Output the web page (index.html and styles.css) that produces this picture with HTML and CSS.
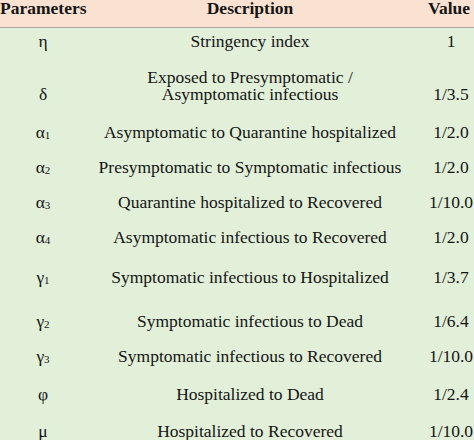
FILE: index.html
```html
<!DOCTYPE html>
<html lang="en">
<head>
<meta charset="utf-8">
<title>Parameters</title>
<link rel="stylesheet" href="styles.css">
</head>
<body>
<table class="params">
  <colgroup>
    <col class="c-param">
    <col class="c-desc">
    <col class="c-val">
  </colgroup>
  <thead>
    <tr class="head">
      <th>Parameters</th>
      <th>Description</th>
      <th>Value</th>
    </tr>
  </thead>
  <tbody>
    <tr class="r-eta"><td>η</td><td>Stringency index</td><td class="val">1</td></tr>
    <tr class="r-delta"><td>δ</td><td><span class="line">Exposed to Presymptomatic /</span><span class="line">Asymptomatic infectious</span></td><td class="val">1/3.5</td></tr>
    <tr class="r-a1"><td>α<span class="sub">1</span></td><td>Asymptomatic to Quarantine hospitalized</td><td class="val">1/2.0</td></tr>
    <tr class="r-a2"><td>α<span class="sub">2</span></td><td>Presymptomatic to Symptomatic infectious</td><td class="val">1/2.0</td></tr>
    <tr class="r-a3"><td>α<span class="sub">3</span></td><td>Quarantine hospitalized to Recovered</td><td class="val">1/10.0</td></tr>
    <tr class="r-a4"><td>α<span class="sub">4</span></td><td>Asymptomatic infectious to Recovered</td><td class="val">1/2.0</td></tr>
    <tr class="r-g1"><td>γ<span class="sub">1</span></td><td>Symptomatic infectious to Hospitalized</td><td class="val">1/3.7</td></tr>
    <tr class="r-g2"><td>γ<span class="sub">2</span></td><td>Symptomatic infectious to Dead</td><td class="val">1/6.4</td></tr>
    <tr class="r-g3"><td>γ<span class="sub">3</span></td><td>Symptomatic infectious to Recovered</td><td class="val">1/10.0</td></tr>
    <tr class="r-phi"><td>φ</td><td>Hospitalized to Dead</td><td class="val">1/2.4</td></tr>
    <tr class="r-mu"><td>μ</td><td>Hospitalized to Recovered</td><td class="val">1/10.0</td></tr>
  </tbody>
</table>
</body>
</html>
```
FILE: styles.css
```css
html, body {
  margin: 0;
  padding: 0;
  background: #e2efd9;
  overflow: hidden;
}

body {
  width: 474px;
  height: 440px;
  font-family: "Liberation Serif", Tinos, "Times New Roman", serif;
  font-size: 17.5px;
  color: #151515;
}

.params {
  border-collapse: collapse;
  table-layout: fixed;
  width: 484px;
}

.c-param { width: 86px; }
.c-desc { width: 328px; }
.c-val { width: 70px; }

.params th,
.params td {
  padding: 0;
  text-align: center;
  vertical-align: bottom;
  line-height: 17px;
  white-space: nowrap;
}

.head th {
  background: #fae2d3;
  font-weight: bold;
  padding-bottom: 10px;
  border-bottom: 1px solid #aaa39e;
}

.params tbody td {
  background: #e2efd9;
}

.params td.val {
  padding-left: 4px;
}

.line {
  display: block;
}

.sub {
  font-size: 11px;
  line-height: 0;
  vertical-align: -1px;
}

.r-eta td { padding-top: 5px; }
.r-delta td { padding-top: 19px; }
.r-a1 td { padding-top: 21px; }
.r-a2 td { padding-top: 18px; }
.r-a3 td { padding-top: 18px; }
.r-a4 td { padding-top: 18px; }
.r-g1 td { padding-top: 23px; }
.r-g2 td { padding-top: 27px; }
.r-g3 td { padding-top: 18px; }
.r-phi td { padding-top: 21px; }
.r-mu td { padding-top: 20px; }
```
